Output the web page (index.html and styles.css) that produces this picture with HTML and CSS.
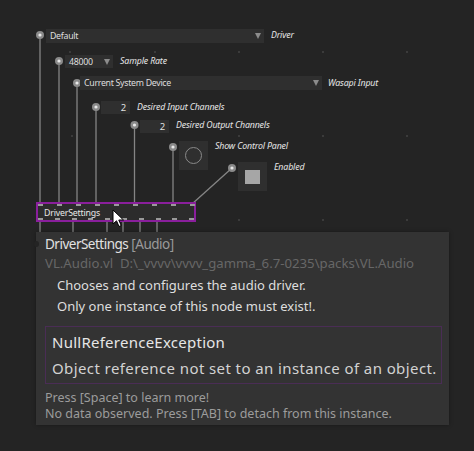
FILE: index.html
```html
<!DOCTYPE html>
<html>
<head>
<meta charset="utf-8">
<link rel="stylesheet" href="styles.css">
</head>
<body>
<div class="canvas">
  <svg class="wires" width="474" height="451" viewBox="0 0 474 451">
    <g fill="#3b3b3b">
      <rect x="69" y="51" width="2" height="2"/><rect x="154" y="51" width="2" height="2"/><rect x="238" y="51" width="2" height="2"/><rect x="322" y="51" width="2" height="2"/><rect x="406" y="51" width="2" height="2"/>
      <rect x="71" y="135" width="2" height="2"/><rect x="238" y="135" width="2" height="2"/><rect x="322" y="135" width="2" height="2"/><rect x="406" y="135" width="2" height="2"/>
      <rect x="238" y="219" width="2" height="2"/><rect x="322" y="219" width="2" height="2"/><rect x="406" y="219" width="2" height="2"/>
    </g>
    <g stroke="#858585" stroke-width="1.3" fill="none">
      <line x1="40" y1="35" x2="40" y2="204"/>
      <line x1="59" y1="61" x2="59" y2="204"/>
      <line x1="77" y1="83" x2="77" y2="204"/>
      <line x1="96" y1="107" x2="96" y2="204"/>
      <line x1="134.5" y1="125" x2="134.5" y2="204"/>
      <line x1="173" y1="147" x2="173" y2="204"/>
      <line x1="232" y1="168" x2="192" y2="204"/>
      <line x1="40" y1="220" x2="40" y2="240"/>
      <line x1="73" y1="220" x2="73" y2="240"/>
      <line x1="107" y1="220" x2="107" y2="240"/>
      <line x1="123" y1="220" x2="123" y2="240"/>
      <line x1="140" y1="220" x2="140" y2="240"/>
      <line x1="157" y1="220" x2="157" y2="240"/>
    </g>
    <g>
      <circle cx="40" cy="35" r="4" fill="#8a8a8a"/><circle cx="40" cy="35" r="1.6" fill="#e8e8e8"/>
      <circle cx="59" cy="61" r="4" fill="#8a8a8a"/><circle cx="59" cy="61" r="1.6" fill="#e8e8e8"/>
      <circle cx="77" cy="83" r="4" fill="#8a8a8a"/><circle cx="77" cy="83" r="1.6" fill="#e8e8e8"/>
      <circle cx="96" cy="107" r="4" fill="#8a8a8a"/><circle cx="96" cy="107" r="1.6" fill="#e8e8e8"/>
      <circle cx="134.5" cy="125" r="4" fill="#8a8a8a"/><circle cx="134.5" cy="125" r="1.6" fill="#e8e8e8"/>
      <circle cx="173" cy="147" r="4" fill="#8a8a8a"/><circle cx="173" cy="147" r="1.6" fill="#e8e8e8"/>
      <circle cx="232" cy="168" r="4" fill="#8a8a8a"/><circle cx="232" cy="168" r="1.6" fill="#e8e8e8"/>
    </g>
  </svg>

  <div class="io enum e-driver"><span>Default</span><i class="arrow"></i></div>
  <div class="lbl l-driver">Driver</div>

  <div class="io enum e-rate"><span>48000</span><i class="arrow"></i></div>
  <div class="lbl l-rate">Sample Rate</div>

  <div class="io enum e-device"><span>Current System Device</span><i class="arrow"></i></div>
  <div class="lbl l-device">Wasapi Input</div>

  <div class="io num n-in">2</div>
  <div class="lbl l-in">Desired Input Channels</div>

  <div class="io num n-out">2</div>
  <div class="lbl l-out">Desired Output Channels</div>

  <div class="io btn b-panel"><i class="ring"></i></div>
  <div class="lbl l-panel">Show Control Panel</div>

  <div class="io btn b-enabled"><i class="sq"></i></div>
  <div class="lbl l-enabled">Enabled</div>

  <div class="node">
    <div class="pins top">
      <i></i><i></i><i></i><i></i><i></i><i></i><i></i><i></i><i></i>
    </div>
    <div class="node-name">DriverSettings</div>
    <div class="pins bottom">
      <i></i><i></i><i></i><i></i><i></i><i></i><i></i><i></i><i></i><i></i>
    </div>
  </div>

  <svg class="cursor" width="14" height="20" viewBox="0 0 14 20">
    <path d="M1 1 L1 15 L4.5 11.8 L7 17.5 L9.2 16.5 L6.8 11 L11.5 11 Z" fill="#ffffff" stroke="#000" stroke-width="1"/>
  </svg>

  <div class="tooltip">
    <i class="notch"></i>
    <div class="title">DriverSettings <span class="cat">[Audio]</span></div>
    <div class="path">VL.Audio.vl&nbsp;&nbsp;D:\_vvvv\vvvv_gamma_6.7-0235\packs\VL.Audio</div>
    <div class="desc">
      <div>Chooses and configures the audio driver.</div>
      <div>Only one instance of this node must exist!.</div>
    </div>
    <div class="error">
      <div class="err-name">NullReferenceException</div>
      <div class="err-msg">Object reference not set to an instance of an object.</div>
    </div>
    <div class="hint">Press [Space] to learn more!</div>
    <div class="hint">No data observed. Press [TAB] to detach from this instance.</div>
  </div>
</div>
</body>
</html>
```
FILE: styles.css
```css
html, body {
  margin: 0;
  padding: 0;
}
body {
  width: 474px;
  height: 451px;
  overflow: hidden;
  background: #242424;
  font-family: "Noto Sans", "Open Sans", sans-serif;
  color: #dcdcdc;
}
.canvas {
  position: relative;
  width: 474px;
  height: 451px;
}
.wires {
  position: absolute;
  left: 0;
  top: 0;
}
.io {
  position: absolute;
  background: #2f2f2f;
  box-sizing: border-box;
  font-size: 8.8px;
  letter-spacing: -0.3px;
  color: #dedede;
}
.enum {
  display: flex;
  align-items: center;
  justify-content: space-between;
  padding: 0 3px 0 4px;
  height: 14px;
}
.arrow {
  width: 0;
  height: 0;
  border-left: 3.5px solid transparent;
  border-right: 3.5px solid transparent;
  border-top: 6px solid #8c8c8c;
}
.e-driver { left: 46px; top: 29px; width: 218px; }
.e-rate { left: 65px; top: 55px; width: 48px; height: 13px; }
.e-device { left: 80px; top: 76px; width: 242px; }
.num {
  height: 13px;
  width: 29px;
  text-align: right;
  padding-right: 4px;
  line-height: 13px;
  font-size: 9.5px;
}
.n-in { left: 101px; top: 101px; }
.n-out { left: 140px; top: 120px; }
.btn {
  width: 29px;
  height: 29px;
  display: flex;
  align-items: center;
  justify-content: center;
}
.b-panel { left: 179px; top: 141px; }
.b-enabled { left: 238px; top: 162px; }
.ring {
  width: 15px;
  height: 15px;
  border: 1.3px solid #8a8a8a;
  border-radius: 50%;
}
.sq {
  width: 15px;
  height: 14px;
  background: #a6a6a6;
}
.lbl {
  position: absolute;
  font-size: 8.8px;
  letter-spacing: -0.15px;
  font-style: italic;
  color: #e6e6e6;
  line-height: 12px;
  white-space: nowrap;
}
.l-driver { left: 271px; top: 29px; }
.l-rate { left: 120px; top: 55px; }
.l-device { left: 328px; top: 77px; }
.l-in { left: 137px; top: 101px; }
.l-out { left: 176px; top: 119px; }
.l-panel { left: 215px; top: 140px; }
.l-enabled { left: 274px; top: 161px; }

.node {
  position: absolute;
  left: 36px;
  top: 202px;
  width: 160px;
  height: 20px;
  box-sizing: border-box;
  border: 2px solid #8a1f9c;
  background: #2c2c2c;
}
.node-name {
  position: absolute;
  left: 6px;
  top: 3px;
  font-size: 8.8px;
  letter-spacing: -0.2px;
  line-height: 12px;
  color: #e8e8e8;
}
.pins {
  position: absolute;
  left: 0;
  display: flex;
}
.pins i {
  display: block;
  width: 5px;
  height: 2px;
  background: #9a9a9a;
}
.pins.top { top: 0; left: 0; gap: 14px; }
.pins.bottom { top: 14px; left: 0; gap: 11.8px; }

.cursor {
  position: absolute;
  left: 112px;
  top: 209px;
}

.tooltip {
  position: absolute;
  left: 36px;
  top: 232px;
  width: 413px;
  height: 193px;
  box-sizing: border-box;
  background: #333333;
  padding: 3px 6px 3px 9px;
  box-shadow: 0 0 4px rgba(0, 0, 0, 0.35);
}
.notch {
  position: absolute;
  left: -2px;
  top: 9px;
  width: 5px;
  height: 6px;
  border-radius: 50%;
  background: #242424;
}
.title {
  font-size: 13.5px;
  letter-spacing: -0.5px;
  line-height: 18px;
  color: #e2e2e2;
}
.cat {
  color: #9a9a9a;
}
.path {
  font-size: 13.2px;
  line-height: 20px;
  color: #676767;
  white-space: nowrap;
}
.desc {
  margin-top: 2px;
  padding-left: 12px;
  font-size: 13px;
  line-height: 21px;
  color: #dedede;
}
.error {
  margin-top: 9px;
  margin-right: 1px;
  border: 1px solid #4a2d55;
  padding: 6px 6px 5px 6px;
}
.err-name {
  font-size: 15px;
  letter-spacing: 0.25px;
  line-height: 18px;
  color: #e6e6e6;
  margin-bottom: 7px;
}
.err-msg {
  font-size: 15px;
  letter-spacing: 0.4px;
  line-height: 20px;
  color: #d2d2d2;
  white-space: nowrap;
}
.hint {
  font-size: 12.5px;
  line-height: 16px;
  color: #9c9c9c;
  white-space: nowrap;
}
.error + .hint {
  margin-top: 6px;
}
```
